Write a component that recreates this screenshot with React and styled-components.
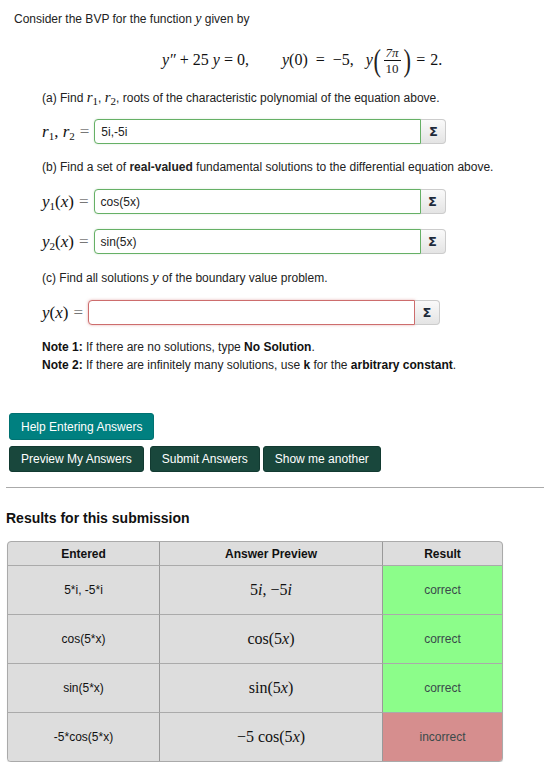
import React from 'react';
import styled, { createGlobalStyle } from 'styled-components';

const Global = createGlobalStyle`
  body {
    margin: 0;
    background: #fff;
    font-family: "Liberation Sans", Arial, sans-serif;
    font-size: 12px;
    color: #222;
  }
`;

const Page = styled.div`
  width: 544px;
  padding-top: 12px;
`;

const Intro = styled.p`
  margin: 0 0 0 14px;
  line-height: 14px;
`;

const Equation = styled.div`
  display: flex;
  align-items: center;
  margin: 14px 0 0 162px;
  height: 40px;
  font-family: "Liberation Serif", "Times New Roman", serif;
  white-space: pre;
`;

const Gap = styled.span`
  display: inline-block;
  width: ${p => p.$w};
`;

const M = styled.span`
  font-family: "Liberation Serif", "Times New Roman", serif;
  font-style: ${p => (p.$upright ? 'normal' : 'italic')};
  font-size: ${p => p.$size || '14px'};
  color: #111;
  white-space: pre;
`;

const Op = styled.span`
  font-family: "Liberation Serif", "Times New Roman", serif;
  font-size: 16px;
  color: #111;
  margin: 0 ${p => p.$sp || '4px'};
`;

const Sub = styled.sub`
  font-style: normal;
  font-size: 11px;
  vertical-align: -3px;
`;

const Paren = styled.span`
  font-family: "Liberation Serif", serif;
  font-size: 32px;
  font-weight: 300;
  line-height: 32px;
  transform: scaleX(0.7);
  display: inline-block;
  margin: 0 -1px;
`;

const Frac = styled.span`
  display: inline-flex;
  flex-direction: column;
  align-items: center;
  font-size: 13px;
  line-height: 13px;
  margin: 0 2px;
`;

const Num = styled.span`
  padding: 0 2px 1px;
  border-bottom: 1px solid #111;
  font-style: italic;
`;

const Den = styled.span`
  padding-top: 1px;
`;

const Body = styled.div`
  padding-left: 42px;
`;

const Prompt = styled.p`
  margin: ${p => p.$top || '0'} 0 0 0;
  line-height: 14px;
`;

const Row = styled.div`
  display: flex;
  align-items: center;
  margin-top: ${p => p.$top || '0'};
  height: 25px;
`;

const Label = styled.span`
  display: inline-flex;
  align-items: center;
  margin-right: 5px;
  color: #333;
`;

const Eq = styled.span`
  font-family: "Liberation Serif", serif;
  font-size: 17px;
  color: #777;
  margin-left: 5px;
`;

const Field = styled.div`
  box-sizing: border-box;
  width: 327px;
  height: 25px;
  border: 1px solid ${p => (p.$bad ? '#cd6d6d' : '#66b066')};
  border-radius: 4px 0 0 4px;
  box-shadow: ${p => (p.$bad ? '0 0 3px rgba(205,109,109,0.55)' : '0 0 2px rgba(102,176,102,0.3)')};
  padding: 0 6px;
  display: flex;
  align-items: center;
  color: #222;
  background: #fff;
`;

const SigmaBtn = styled.div`
  box-sizing: border-box;
  width: 25px;
  height: 25px;
  border: 1px solid #ccc;
  border-left: none;
  border-radius: 0 4px 4px 0;
  background: linear-gradient(#fafafa, #e4e4e4);
  display: flex;
  align-items: center;
  justify-content: center;
  font-family: "DejaVu Sans", sans-serif;
  font-weight: bold;
  font-size: 13px;
  color: #1d2a3a;
`;

const Note = styled.p`
  margin: ${p => p.$top || '0'} 0 0 0;
  line-height: 18px;
  color: #222;
  b { color: #111; }
`;

const Buttons = styled.div`
  padding-left: 9px;
  margin-top: 39px;
  display: flex;
  flex-direction: column;
  gap: 6px;
`;

const BtnRow = styled.div`
  display: flex;
`;

const Btn = styled.button`
  box-sizing: border-box;
  height: ${p => (p.$help ? '27px' : '26px')};
  padding: 0 11px;
  margin-left: ${p => p.$ml || '0'};
  border: 1px solid ${p => (p.$help ? '#007272' : '#123a31')};
  border-radius: 3px;
  background: ${p => (p.$help ? '#008080' : '#19473c')};
  color: #fff;
  font-family: "Liberation Sans", Arial, sans-serif;
  font-size: 12px;
  cursor: pointer;
`;

const Rule = styled.hr`
  margin: 15px 0 0 6px;
  border: none;
  border-top: 1px solid #aaa;
`;

const ResultsTitle = styled.h3`
  margin: 22px 0 0 6px;
  font-size: 14px;
  line-height: 16px;
  color: #111;
`;

const Table = styled.table`
  margin: 15px 0 0 7px;
  width: 496px;
  border-collapse: separate;
  border-spacing: 0;
  border: 1px solid #aaa;
  border-radius: 4px;
  overflow: hidden;
  background: #ddd;
  box-shadow: 0 1px 1px rgba(0,0,0,0.15);
`;

const Th = styled.th`
  height: 23px;
  font-size: 12px;
  color: #111;
  border-left: ${p => (p.$first ? 'none' : '1px solid #999')};
  border-bottom: 1px solid #aaa;
  padding: 0;
  width: ${p => p.$w};
`;

const Td = styled.td`
  height: 48px;
  padding: 0;
  text-align: center;
  border-left: ${p => (p.$first ? 'none' : '1px solid #999')};
  border-top: ${p => (p.$top ? 'none' : '1px solid #aaa')};
  background: ${p => (p.$status === 'correct' ? '#8cfd8a' : p.$status === 'incorrect' ? '#d68e8e' : '#ddd')};
  color: ${p => (p.$status ? '#3a4a4a' : '#111')};
`;

const P = ({ children, up }) => <M $size="16px" $upright={up}>{children}</M>;

const rows = [
  { entered: '5*i, -5*i', preview: <><P up>5</P><P>i</P><P up>, −5</P><P>i</P></>, status: 'correct' },
  { entered: 'cos(5*x)', preview: <><P up>cos(5</P><P>x</P><P up>)</P></>, status: 'correct' },
  { entered: 'sin(5*x)', preview: <><P up>sin(5</P><P>x</P><P up>)</P></>, status: 'correct' },
  { entered: '-5*cos(5*x)', preview: <><P up>−5 cos(5</P><P>x</P><P up>)</P></>, status: 'incorrect' },
];

function AnswerRow({ label, value, bad, top }) {
  return (
    <Row $top={top}>
      <Label>{label}<Eq>=</Eq></Label>
      <Field $bad={bad}>{value}</Field>
      <SigmaBtn>Σ</SigmaBtn>
    </Row>
  );
}

const L = ({ children, up }) => <M $size="17px" $upright={up}>{children}</M>;

export default function App() {
  return (
    <Page>
      <Global />
      <Intro>Consider the BVP for the function <M>y</M> given by</Intro>
      <Equation>
        <P>y″</P><Op>+</Op><P up>25 </P><P>y</P><Op>=</Op><P up>0,</P>
        <Gap $w="33px" />
        <P>y</P><P up>(0)</P><Op $sp="8px">=</Op><P up>−5,</P>
        <Gap $w="12px" />
        <P>y</P>
        <Paren>(</Paren>
        <Frac><Num>7π</Num><Den>10</Den></Frac>
        <Paren>)</Paren>
        <Op $sp="5px">=</Op><P up>2.</P>
      </Equation>
      <Body>
        <Prompt $top="10px">(a) Find <M $size="15px">r<Sub>1</Sub></M>, <M $size="15px">r<Sub>2</Sub></M>, roots of the characteristic polynomial of the equation above.</Prompt>
        <AnswerRow top="11px" label={<><L>r<Sub>1</Sub></L><L up>, </L><L>r<Sub>2</Sub></L></>} value="5i,-5i" />
        <Prompt $top="16px">(b) Find a set of <b>real-valued</b> fundamental solutions to the differential equation above.</Prompt>
        <AnswerRow top="15px" label={<><L>y</L><L up><Sub>1</Sub>(</L><L>x</L><L up>)</L></>} value="cos(5x)" />
        <AnswerRow top="15px" label={<><L>y</L><L up><Sub>2</Sub>(</L><L>x</L><L up>)</L></>} value="sin(5x)" />
        <Prompt $top="16px">(c) Find all solutions <M $size="15px">y</M> of the boundary value problem.</Prompt>
        <AnswerRow top="15px" bad label={<><L>y</L><L up>(</L><L>x</L><L up>)</L></>} value="" />
        <Note $top="13px"><b>Note 1:</b> If there are no solutions, type <b>No Solution</b>.</Note>
        <Note><b>Note 2:</b> If there are infinitely many solutions, use <b>k</b> for the <b>arbitrary constant</b>.</Note>
      </Body>
      <Buttons>
        <BtnRow><Btn $help>Help Entering Answers</Btn></BtnRow>
        <BtnRow>
          <Btn>Preview My Answers</Btn>
          <Btn $ml="6px">Submit Answers</Btn>
          <Btn $ml="3px">Show me another</Btn>
        </BtnRow>
      </Buttons>
      <Rule />
      <ResultsTitle>Results for this submission</ResultsTitle>
      <Table>
        <thead>
          <tr>
            <Th $first $w="151px">Entered</Th>
            <Th $w="222px">Answer Preview</Th>
            <Th>Result</Th>
          </tr>
        </thead>
        <tbody>
          {rows.map((r, i) => (
            <tr key={i}>
              <Td $first $top={i === 0}>{r.entered}</Td>
              <Td $top={i === 0}>{r.preview}</Td>
              <Td $top={i === 0} $status={r.status}>{r.status}</Td>
            </tr>
          ))}
        </tbody>
      </Table>
    </Page>
  );
}
